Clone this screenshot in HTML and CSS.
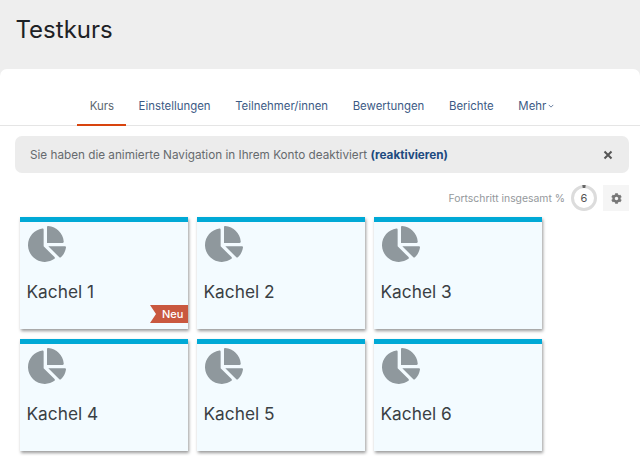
FILE: index.html
```html
<!DOCTYPE html>
<html lang="de">
<head>
<meta charset="utf-8">
<title>Testkurs</title>
<link rel="stylesheet" href="styles.css">
</head>
<body>
<svg class="defs" width="0" height="0" aria-hidden="true">
  <symbol id="pie" viewBox="0 0 544 512"><path d="M527.79 288H290.5l158.03 158.03c6.04 6.04 15.98 6.53 22.19.68 38.7-36.46 65.32-85.61 73.13-140.86 1.34-9.46-6.51-17.85-16.06-17.85zm-15.83-64.8C503.72 103.74 408.26 8.28 288.8.04 279.68-.59 272 7.1 272 16.24V240h223.77c9.14 0 16.82-7.68 16.19-16.8zM224 288V50.71c0-9.55-8.39-17.4-17.84-16.06C86.99 51.49-4.1 155.6.14 280.37 4.5 408.51 114.83 513.59 243.03 511.98c50.4-.63 96.97-16.87 135.26-44.03 7.9-5.6 8.42-17.23 1.57-24.08L224 288z"/></symbol>
</svg>
<header class="page-header"><h1 class="title">Testkurs</h1></header>
<main class="content">
  <nav class="tabs">
    <a class="tab active">Kurs</a>
    <a class="tab">Einstellungen</a>
    <a class="tab">Teilnehmer/innen</a>
    <a class="tab">Bewertungen</a>
    <a class="tab">Berichte</a>
    <a class="tab">Mehr<svg class="caret" viewBox="0 0 8 8"><path d="M1 2.5 4 5.5 7 2.5"/></svg></a>
  </nav>
  <div class="alert">
    <span>Sie haben die animierte Navigation in Ihrem Konto deaktiviert <a class="alert-link">(reaktivieren)</a></span>
    <svg class="close" viewBox="0 0 10 10"><path d="M1.5 1.5 8.5 8.5M8.5 1.5 1.5 8.5"/></svg>
  </div>
  <div class="progress-row">
    <span class="progress-label">Fortschritt insgesamt %</span>
    <span class="ring">
      <svg viewBox="0 0 26 26" width="26" height="26"><circle class="ring-bg" cx="13" cy="13" r="11.5"/><path class="ring-fg" d="M11.5 1.6A11.5 11.5 0 0 1 14.5 1.6"/></svg>
      <span class="ring-num">6</span>
    </span>
    <button class="gear-btn"><svg viewBox="0 0 512 512" width="11" height="11"><path d="M487.4 315.7l-42.6-24.6c4.3-23.2 4.3-47 0-70.2l42.6-24.6c4.9-2.8 7.1-8.6 5.5-14-11.1-35.6-30-67.8-54.7-94.6-3.8-4.1-10-5.1-14.8-2.3L380.8 110c-17.9-15.4-38.5-27.3-60.8-35.1V25.8c0-5.6-3.9-10.5-9.4-11.7-36.7-8.2-74.3-7.8-109.2 0-5.5 1.2-9.4 6.1-9.4 11.7V75c-22.2 7.9-42.8 19.8-60.8 35.1L88.7 85.5c-4.9-2.8-11-1.9-14.8 2.3-24.7 26.7-43.6 58.9-54.7 94.6-1.7 5.4.6 11.2 5.5 14L67.3 221c-4.3 23.2-4.3 47 0 70.2l-42.6 24.6c-4.9 2.8-7.1 8.6-5.5 14 11.1 35.6 30 67.8 54.7 94.6 3.8 4.1 10 5.1 14.8 2.3l42.6-24.6c17.9 15.4 38.5 27.3 60.8 35.1v49.2c0 5.6 3.9 10.5 9.4 11.7 36.7 8.2 74.3 7.8 109.2 0 5.5-1.2 9.4-6.1 9.4-11.7v-49.2c22.2-7.9 42.8-19.8 60.8-35.1l42.6 24.6c4.9 2.8 11 1.9 14.8-2.3 24.7-26.7 43.6-58.9 54.7-94.6 1.5-5.5-.7-11.3-5.6-14.1zM256 336c-44.1 0-80-35.9-80-80s35.9-80 80-80 80 35.9 80 80-35.9 80-80 80z"/></svg></button>
  </div>
  <section class="tiles">
    <article class="tile"><svg class="pie"><use href="#pie"/></svg><h2 class="tile-name">Kachel 1</h2><span class="ribbon">Neu</span></article>
    <article class="tile"><svg class="pie"><use href="#pie"/></svg><h2 class="tile-name">Kachel 2</h2></article>
    <article class="tile"><svg class="pie"><use href="#pie"/></svg><h2 class="tile-name">Kachel 3</h2></article>
    <article class="tile"><svg class="pie"><use href="#pie"/></svg><h2 class="tile-name">Kachel 4</h2></article>
    <article class="tile"><svg class="pie"><use href="#pie"/></svg><h2 class="tile-name">Kachel 5</h2></article>
    <article class="tile"><svg class="pie"><use href="#pie"/></svg><h2 class="tile-name">Kachel 6</h2></article>
  </section>
</main>
</body>
</html>
```
FILE: styles.css
```css
* { box-sizing: border-box; }
html, body { margin: 0; height: 456px; overflow: hidden; }
body { background: #eeeeee; font-family: Inter, "Liberation Sans", sans-serif; color: #495057; }
.defs { display: block; height: 0; }
.page-header { height: 69px; padding: 14px 15.5px 0; }
.title { margin: 0; font-family: Inter, sans-serif; font-size: 24px; line-height: 31px; font-weight: 400; color: #1d2125; }
.content { background: #fff; height: 387px; border-radius: 7px 7px 0 0; }
.tabs { display: flex; justify-content: center; height: 57px; padding: 18px 0 0 4px; border-bottom: 1px solid #e5e5e5; font-size: 11.4px; }
.tab { display: flex; align-items: center; height: 39px; padding: 0 12.3px 2px; color: #3c5a85; white-space: nowrap; }
.tab.active { color: #5b6670; border-bottom: 2px solid #d8440e; padding-bottom: 0; }
.caret { width: 6px; height: 6px; margin-left: 2px; fill: none; stroke: #3c5a85; stroke-width: 1; }
.alert { display: flex; align-items: center; justify-content: space-between; height: 37px; margin: 10px 11px 0 15px; padding: 0 16px 0 15px; background: #ececec; border-radius: 7px; font-size: 11.72px; color: #666a6e; }
.alert-link { font-weight: 700; color: #1d4a80; }
.close { width: 10px; height: 10px; fill: none; stroke: #555; stroke-width: 2; }
.progress-row { display: flex; align-items: center; justify-content: flex-end; height: 26px; margin: 12px 11px 0 15px; }
.progress-label { font-size: 10.4px; color: #94989c; margin-right: 6px; }
.ring { position: relative; width: 26px; height: 26px; margin-right: -1px; }
.ring svg { display: block; }
.ring-bg { fill: none; stroke: #dcdcdc; stroke-width: 3; }
.ring-fg { fill: none; stroke: #666; stroke-width: 3; }
.ring-num { position: absolute; inset: 0; display: flex; align-items: center; justify-content: center; font-size: 11px; color: #555; }
.gear-btn { display: flex; align-items: center; justify-content: center; width: 26px; height: 26px; margin-left: 7px; padding: 0; border: 0; background: #f5f5f5; }
.gear-btn svg { fill: #777; }
.tiles { display: grid; grid-template-columns: repeat(3, 168px); grid-auto-rows: 112px; gap: 10px 9px; margin: 6px 0 0 20px; }
.tile { position: relative; display: flex; flex-direction: column; background: #f3fbff; border-top: 5px solid #00a9d6; box-shadow: 1px 2px 3px rgba(0,0,0,.4); padding: 4px 0 0 8px; }
.pie { width: 38px; height: 36px; fill: #8f989d; }
.tile-name { margin: 19px 0 0 -1.5px; font-family: Inter, sans-serif; font-size: 17.3px; line-height: 22px; font-weight: 400; color: #3a3f44; }
.ribbon { position: absolute; right: 0; bottom: 6px; width: 38px; height: 18px; padding-left: 12px; background: #c9583f; color: #fff; font-size: 11px; font-weight: 500; line-height: 18px; clip-path: polygon(0 0, 100% 0, 100% 100%, 0 100%, 6px 50%); }
```
